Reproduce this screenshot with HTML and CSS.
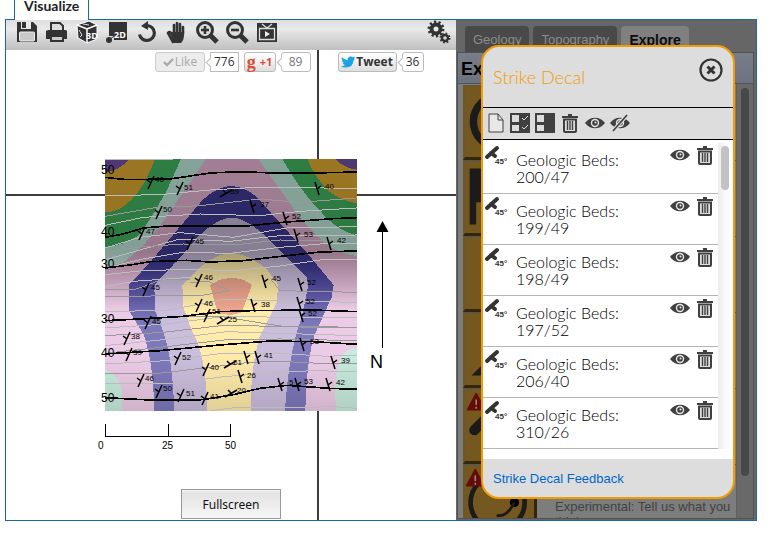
FILE: index.html
```html
<!DOCTYPE html>
<html lang="en">
<head>
<meta charset="utf-8">
<title>Visualize</title>
<link rel="stylesheet" href="styles.css">
</head>
<body>
<svg width="0" height="0" class="defs" aria-hidden="true">
  <symbol id="i-eye" viewBox="0 0 20 12"><path d="M0 6C5-1 15-1 20 6 15 13 5 13 0 6Z" fill="#404040"/><circle cx="10" cy="6" r="4.2" fill="#e6e6e6"/><circle cx="10" cy="6" r="2.8" fill="#404040"/><circle cx="10.5" cy="5.5" r="1" fill="#e6e6e6"/></symbol>
  <symbol id="i-trash" viewBox="0 0 16 20"><path d="M6 1h4v2h6v2H0V3h6z" fill="#404040"/><path d="M2 6.500h12V18q0 1-1 1H3q-1 0-1-1z" fill="#ddd" stroke="#404040" stroke-width="2"/><path d="M5.500 8v9M8 8v9M10.500 8v9" stroke="#404040" stroke-width="1.400"/></symbol>
  <symbol id="i-strike" viewBox="0 0 26 20"><path d="M3 12 13 3M7 8l4 3" stroke="#333" stroke-width="4" stroke-linecap="round"/><text x="11" y="19" class="deg">45°</text></symbol>
  <symbol id="i-warn" viewBox="0 0 20 20"><path d="M10 1 19 18H1z" fill="#650c08" stroke="#650c08" stroke-width="2" stroke-linejoin="round"/><path d="M10 7v6M10 15v2" stroke="#999" stroke-width="1.500"/></symbol>
</svg>

<nav class="tabs"><a class="tab" href="#visualize">Visualize</a></nav>

<main class="frame" id="visualize">
  <section class="viewer">
    <div class="toolbar">
      <button aria-label="Save"><svg viewBox="0 0 24 24"><path d="M2 2h16l4 4v16H2z" fill="#333"/><path d="M6 2h10v7H6z" fill="#e8e8e8"/><path d="M7 2h4v6H7z" fill="#333"/><rect x="4.500" y="12" width="15" height="9" rx="1" fill="#c9c9c9" stroke="#eee"/></svg></button>
      <button aria-label="Print"><svg viewBox="0 0 24 24"><path d="M6 11V3h9l3 3v5" fill="#ddd" stroke="#333" stroke-width="2"/><path d="M3 10h18l1 1v8h-4v-3H6v3H1v-8z" fill="#333"/><path d="M6 16h12v5H6z" fill="#ccc" stroke="#333" stroke-width="2"/></svg></button>
      <button aria-label="3D view"><svg viewBox="0 0 24 24"><path d="M2 5 14 1l8 4v14l-10 4-9-5z" fill="#333" stroke="#fff"/><path d="M2 5l10 4 10-4M12 9v14" fill="none" stroke="#fff" stroke-width="1.500"/><path d="m4 10 3 5-2 2M8 4l6 1" stroke="#ddd" fill="none"/><text x="11" y="19" class="glyph">3D</text></svg></button>
      <button aria-label="2D view"><svg viewBox="0 0 24 24"><path d="M4 2h18v18H9V16H4z" fill="#333"/><circle cx="4" cy="20" r="3" fill="#333"/><path d="M5 19l6-4" stroke="#333"/><text x="9" y="18" class="glyph">2D</text></svg></button>
      <button aria-label="Rotate"><svg viewBox="0 0 24 24"><path d="M12 5.500a7.500 7.500 0 1 1-7.500 9" fill="none" stroke="#333" stroke-width="3.200"/><path d="M13 1v9L6 6z" fill="#333"/></svg></button>
      <button aria-label="Pan"><svg viewBox="0 0 24 24"><path d="M8 22 3 13q1-2 3 0l2 2M9 14V5M12 13V3M15 13V4M18 14V7" fill="none" stroke="#333" stroke-width="2.600" stroke-linecap="round"/><path d="M7.500 12H19v4q0 4-3 7H9l-3-7z" fill="#333"/></svg></button>
      <button aria-label="Zoom in"><svg viewBox="0 0 24 24"><circle cx="10" cy="10" r="7.500" fill="#ddd" stroke="#333" stroke-width="3"/><path d="m15 15 7 7" stroke="#333" stroke-width="5"/><path d="M10 6v8M6 10h8" stroke="#333" stroke-width="2.600"/></svg></button>
      <button aria-label="Zoom out"><svg viewBox="0 0 24 24"><circle cx="10" cy="10" r="7.500" fill="#ddd" stroke="#333" stroke-width="3"/><path d="m15 15 7 7" stroke="#333" stroke-width="5"/><path d="M6 10h8" stroke="#333" stroke-width="2.600"/></svg></button>
      <button aria-label="Movie"><svg viewBox="0 0 24 24"><path d="M2 3h20v19H2z" fill="#333"/><path d="M4.500 8.500h15v11h-15zM7 4l5 4 5-4" fill="none" stroke="#ddd" stroke-width="1.300"/><path d="M10 11v6l5-3z" fill="#eee"/></svg></button>
      <button class="settings" aria-label="Settings"><svg viewBox="0 0 24 24"><circle cx="9" cy="9" r="4.500" fill="none" stroke="#333" stroke-width="4"/><circle cx="9" cy="9" r="7" fill="none" stroke="#333" stroke-width="3" stroke-dasharray="2.200 2.198"/><circle cx="18" cy="18" r="3" fill="none" stroke="#333" stroke-width="2.400"/><circle cx="18" cy="18" r="4.500" fill="none" stroke="#333" stroke-width="2" stroke-dasharray="1.700 1.834"/></svg></button>
    </div>
    <div class="stage">
      <svg class="canvas" viewBox="6 50 450 470" preserveAspectRatio="xMidYMin slice" role="img" aria-label="Geologic map">
        <defs>
          <linearGradient id="bg" x1="0" y1="0" x2="0" y2="1"><stop offset="0" stop-color="#f0bbdd"/><stop offset=".4" stop-color="#e3b3d2"/><stop offset=".6" stop-color="#eccbe6"/><stop offset="1" stop-color="#eccbe6"/></linearGradient>
          <linearGradient id="blue" gradientUnits="userSpaceOnUse" x1="0" y1="95" x2="0" y2="770"><stop offset="0" stop-color="#433d9b"/><stop offset=".35" stop-color="#403a97"/><stop offset=".62" stop-color="#7e79ba"/><stop offset="1" stop-color="#7d79bc"/></linearGradient>
          <linearGradient id="shade" x1="0" y1="0" x2="0" y2="1"><stop offset="0" stop-color="#000" stop-opacity=".32"/><stop offset=".37" stop-color="#000" stop-opacity=".34"/><stop offset=".6" stop-color="#000" stop-opacity="0"/><stop offset=".78" stop-color="#000" stop-opacity="0"/><stop offset="1" stop-color="#000" stop-opacity=".12"/></linearGradient>
          <g id="sl" fill="none" stroke="#000"><path d="M3-6-3 7M-4-2 0 1"/></g>
          <g id="sr" fill="none" stroke="#000"><path d="M-2-6 2 7M0 1 4-2"/></g>
          <g id="sh" fill="none" stroke="#000"><path d="M-6 4 6-3M-3-3 0 0"/></g>
        </defs>
        <path d="M318 50v470M6 195h450" stroke="#3c3c3c" stroke-width="2" shape-rendering="crispEdges"/>
        <g transform="translate(100 154) scale(.33333)" shape-rendering="crispEdges">
          <path fill="url(#bg)" d="M15 15h756v756H15z"/>
          <path fill="#c3f0e0" d="M15 15H317L270 85 180 215 120 285 70 325 15 340ZM475 15H771V306Q715 300 670 265L610 205Z"/>
          <path fill="#43b862" d="M15 15H243L200 110Q150 200 115 245 70 275 15 280ZM547 15H771V244Q710 230 660 170 600 110 547 15Z"/>
          <path fill="#e3ad33" d="M15 15H165Q130 110 80 150 50 175 15 175ZM622 15H771V148Q720 140 685 110 645 70 622 15Z"/>
          <path fill="#7452a8" d="M15 15H87Q60 50 15 55ZM705 15H771V47Q730 42 705 15Z"/>
          <path fill="#c7ebdd" d="M15 647Q50 660 65 700V771H15ZM771 582Q725 585 715 630 702 670 708 771H771Z"/>
          <path fill="url(#blue)" d="M395 96Q440 98 475 135L615 290 701 393 695 430 645 540Q620 610 616 771H163Q160 620 130 540L87 470V393L150 325 300 147Q345 98 395 96Z"/>
          <path fill="#cbbedd" d="M395 191Q440 192 500 250L620 370 625 393 605 490Q565 600 555 771H222Q220 610 185 520L165 470 163 393 250 300Q330 195 395 191Z"/>
          <path fill="#ffebaa" d="M395 297Q440 298 500 345L535 393 530 445 480 545Q450 640 453 771H321Q320 600 275 530L250 460 247 393 300 340Q350 298 395 297Z"/>
          <path fill="#eda58e" d="M330 393 360 377 395 371 430 377 456 393 425 475Q390 490 353 475Z"/>
          <path fill="url(#shade)" d="M15 15h756v756H15z"/>
          <g fill="none" stroke="#bcbcbc" stroke-width="3">
            <path d="M15 125 180 122 330 108 470 100 770 103M15 214 130 190 300 180 480 185 600 172 770 162M15 282 120 250 240 236 400 250 560 222 770 218M15 318 130 285 240 255 390 262 530 246 770 243M15 342 130 315 250 295 390 298 540 280 660 270 770 268M15 362 130 350 270 346 400 350 540 336 660 318 770 318M15 398 100 382 200 375 270 370M15 473 200 469 380 435 500 440 770 445M15 522 200 510 380 486 540 490 770 492M15 575 180 558 380 533 540 538 770 545M15 630 200 620 350 600 540 598 680 607 770 603M15 688 210 690 370 668 540 655 640 650 770 653M15 17 220 17 M330 771 410 760 550 762 700 758 770 763"/>
          </g>
          <g fill="none" stroke="#999" stroke-width="3">
            <path d="M15 187 160 162 300 155 480 135 600 145 770 132M15 297 130 278 250 270 400 273 540 258 660 260 770 248M15 408 110 405 190 375 270 376M270 386 325 382 390 410 300 425 15 427M510 372 540 410 770 415M15 500 180 490 360 487 540 516 770 520M15 545 190 535 380 513 540 518 770 522M15 598 180 580 390 556 540 555 770 560M15 658 190 657 310 642 450 625 540 622 660 628 770 628"/>
          </g>
          <g fill="none" stroke="#000" stroke-width="5">
            <path d="M15 70 80 77 210 75 330 57 420 53 520 57 690 56 770 54M15 250 70 240 130 222 200 216 430 217 560 204 700 194 770 191M15 342 90 333 150 323 260 319 330 324 430 320 560 305 660 294 770 291M15 500 120 495 250 487 360 473 450 470 640 468 770 473M15 600 180 590 360 573 510 561 640 563 770 571M15 731 150 738 310 737 400 722 480 703 560 694 690 703 770 706"/>
          </g>
        </g>
        <g stroke-width="1.500">
          <use href="#sl" x="151" y="182"/><use href="#sl" x="180" y="188"/><use href="#sl" x="159" y="212"/><use href="#sl" x="142" y="233"/><use href="#sl" x="190" y="243"/><use href="#sl" x="199" y="280"/><use href="#sl" x="146" y="289"/><use href="#sl" x="199" y="305"/><use href="#sl" x="148" y="322"/><use href="#sl" x="207" y="315"/><use href="#sl" x="127" y="338"/><use href="#sl" x="129" y="354"/><use href="#sl" x="178" y="358"/><use href="#sl" x="206" y="369"/><use href="#sl" x="141" y="380"/><use href="#sl" x="159" y="391"/><use href="#sl" x="181" y="395"/><use href="#sl" x="205" y="398"/>
          <use href="#sh" x="226" y="193"/><use href="#sh" x="223" y="320"/><use href="#sh" x="230" y="364"/><use href="#sh" x="231" y="393"/>
          <use href="#sr" x="317" y="188"/><use href="#sr" x="252" y="206"/><use href="#sr" x="285" y="218"/><use href="#sr" x="296" y="235"/><use href="#sr" x="329" y="243"/><use href="#sr" x="264" y="281"/><use href="#sr" x="300" y="284"/><use href="#sr" x="253" y="305"/><use href="#sr" x="299" y="303"/><use href="#sr" x="301" y="315"/><use href="#sr" x="302" y="344"/><use href="#sr" x="246" y="357"/><use href="#sr" x="257" y="357"/><use href="#sr" x="333" y="362"/><use href="#sr" x="240" y="376"/><use href="#sr" x="280" y="384"/><use href="#sr" x="297" y="384"/><use href="#sr" x="328" y="384"/>
        </g>
        <g class="dips">
          <text x="155" y="182">46</text><text x="184" y="190">51</text><text x="163" y="212">50</text><text x="146" y="234">47</text><text x="195" y="244">45</text><text x="204" y="280">46</text><text x="151" y="290">45</text><text x="204" y="306">46</text><text x="152" y="324">45</text><text x="212" y="314">51</text><text x="131" y="339">38</text><text x="133" y="355">39</text><text x="182" y="360">52</text><text x="210" y="370">40</text><text x="145" y="381">46</text><text x="163" y="391">50</text><text x="186" y="396">51</text><text x="210" y="399">41</text>
          <text x="230" y="194">39</text><text x="228" y="322">25</text><text x="233" y="365">21</text><text x="237" y="393">20</text><text x="325" y="189">40</text><text x="260" y="207">37</text><text x="292" y="219">52</text><text x="304" y="237">53</text><text x="337" y="243">42</text><text x="272" y="281">45</text><text x="307" y="285">52</text><text x="261" y="307">38</text><text x="306" y="304">52</text><text x="308" y="316">52</text><text x="310" y="344">53</text><text x="264" y="358">41</text><text x="341" y="363">39</text><text x="247" y="378">26</text><text x="289" y="385">5</text><text x="304" y="384">53</text><text x="336" y="385">42</text>
        </g>
        <g class="heights"><text x="101" y="174">50</text><text x="101" y="236">40</text><text x="101" y="268">30</text><text x="101" y="323">30</text><text x="101" y="357">40</text><text x="101" y="402">50</text></g>
        <path d="M105.500 424v12h125v-12M168.500 424v12M382.500 232v116" fill="none" stroke="#000" shape-rendering="crispEdges"/>
        <path d="M382.500 221l6 11h-12z"/>
        <g class="scale"><text x="98" y="449">0</text><text x="162" y="449">25</text><text x="225" y="449">50</text></g>
        <text x="370" y="368" class="north">N</text>
      </svg>
      <div class="social">
        <button class="pill like" disabled><svg width="11" height="9" viewBox="0 0 11 9"><path d="m1 4 3 3 6-6" fill="none" stroke="#aaa" stroke-width="2.400"/></svg>Like</button>
        <span class="count square">776</span>
        <button class="pill plus"><span class="g">g</span>+1</button>
        <span class="count pale">89</span>
        <button class="pill tweet"><svg width="14" height="12" viewBox="0 0 15 12"><path d="M1 1q3 3 6 3 0-4 3.500-4 1.500 0 2.500 1l2-.5-1 2 1 .2-1.500 1.500Q13 12 5 12q-3 0-5-1.500 3 0 4.500-1.300Q2.500 9 2 7h1.200Q1 6 1 4l1 .3Q0 2.500 1 1Z" fill="#1ba3e6"/></svg>Tweet</button>
        <span class="count">36</span>
      </div>
      <button class="fullscreen">Fullscreen</button>
    </div>
  </section>

  <aside class="side">
    <nav class="side-tabs"><a href="#geology">Geology</a><a href="#topography">Topography</a><a class="on" href="#explore">Explore</a></nav>
    <div class="explore" id="explore">
      <h2>Explore</h2>
      <div class="tools">
        <ul>
          <li><svg viewBox="0 0 74 74"><circle cx="37" cy="37" r="28" fill="none" stroke="#1b1b1b" stroke-width="8"/></svg></li>
          <li><svg viewBox="0 0 74 74"><path d="M5 6h62v60H56V42H12v24H5z" fill="#1b1b1b"/></svg></li>
          <li><svg viewBox="0 0 74 74"></svg></li>
          <li><svg viewBox="0 0 74 74"><path d="M7 65 37 35 67 65z" fill="#1b1b1b"/></svg></li>
          <li><svg viewBox="0 0 74 74"><path d="M10 42 38 14" stroke="#1b1b1b" stroke-width="11" stroke-linecap="round"/><use href="#i-warn" x="2" y="2" width="20" height="20"/></svg></li>
          <li><svg viewBox="0 0 74 74"><circle cx="35" cy="38" r="29" fill="none" stroke="#1b1b1b" stroke-width="5"/><circle cx="53" cy="38" r="5"/><path d="M53 38Q45 54 34 52" fill="none" stroke="#1b1b1b" stroke-width="3"/><use href="#i-warn" x="1" y="2" width="20" height="20"/></svg><p>Experimental: Tell us what you think</p></li>
        </ul>
        <div class="side-scroll"><i></i></div>
      </div>
    </div>

    <section class="dialog" role="dialog" aria-labelledby="dialog-title">
      <header><h1 id="dialog-title">Strike Decal</h1><button aria-label="Close"><svg width="24" height="24" viewBox="0 0 24 24"><circle cx="12" cy="12" r="10.500" fill="none" stroke="#333" stroke-width="2.200"/><path d="m8.500 8.500 7 7m0-7-7 7" stroke="#333" stroke-width="3"/></svg></button></header>
      <div class="actions">
        <button aria-label="New"><svg width="16" height="20" viewBox="0 0 16 20"><path d="M1 1h9l5 6v12H1z" fill="#e8e8e8" stroke="#404040"/><path d="M10 1v6h5" fill="none" stroke="#404040"/></svg></button>
        <button aria-label="Select all"><svg width="20" height="20" viewBox="0 0 20 20"><path d="M0 0h20v20H0z" fill="#404040"/><path d="M2 2h7v7H2zM2 12h7v6H2z" fill="#ddd"/><path d="m12 5 2 2 4-4M12 14l2 2 4-4" fill="none" stroke="#ddd"/></svg></button>
        <button aria-label="Select none"><svg width="20" height="20" viewBox="0 0 20 20"><path d="M0 0h20v20H0z" fill="#404040"/><path d="M2 2h7v7H2zM2 12h7v6H2z" fill="#ddd"/></svg></button>
        <button aria-label="Delete"><svg width="16" height="20"><use href="#i-trash"/></svg></button>
        <button aria-label="Show"><svg width="20" height="12"><use href="#i-eye"/></svg></button>
        <button aria-label="Hide"><svg width="20" height="18" viewBox="0 0 20 18"><use href="#i-eye" y="3" width="20" height="12"/><path d="M3 17 17 1" stroke="#ddd" stroke-width="4"/><path d="M3 17 17 1" stroke="#404040" stroke-width="1.600"/></svg></button>
      </div>
      <div class="body">
        <ul class="rows">
          <li><svg width="26" height="20"><use href="#i-strike"/></svg><span>Geologic Beds: 200/47</span><button aria-label="Show"><svg width="20" height="12"><use href="#i-eye"/></svg></button><button aria-label="Delete"><svg width="16" height="20"><use href="#i-trash"/></svg></button></li>
          <li><svg width="26" height="20"><use href="#i-strike"/></svg><span>Geologic Beds: 199/49</span><button aria-label="Show"><svg width="20" height="12"><use href="#i-eye"/></svg></button><button aria-label="Delete"><svg width="16" height="20"><use href="#i-trash"/></svg></button></li>
          <li><svg width="26" height="20"><use href="#i-strike"/></svg><span>Geologic Beds: 198/49</span><button aria-label="Show"><svg width="20" height="12"><use href="#i-eye"/></svg></button><button aria-label="Delete"><svg width="16" height="20"><use href="#i-trash"/></svg></button></li>
          <li><svg width="26" height="20"><use href="#i-strike"/></svg><span>Geologic Beds: 197/52</span><button aria-label="Show"><svg width="20" height="12"><use href="#i-eye"/></svg></button><button aria-label="Delete"><svg width="16" height="20"><use href="#i-trash"/></svg></button></li>
          <li><svg width="26" height="20"><use href="#i-strike"/></svg><span>Geologic Beds: 206/40</span><button aria-label="Show"><svg width="20" height="12"><use href="#i-eye"/></svg></button><button aria-label="Delete"><svg width="16" height="20"><use href="#i-trash"/></svg></button></li>
          <li><svg width="26" height="20"><use href="#i-strike"/></svg><span>Geologic Beds: 310/26</span><button aria-label="Show"><svg width="20" height="12"><use href="#i-eye"/></svg></button><button aria-label="Delete"><svg width="16" height="20"><use href="#i-trash"/></svg></button></li>
        </ul>
        <div class="scroll"><i></i></div>
      </div>
      <footer><a href="#feedback">Strike Decal Feedback</a></footer>
    </section>
  </aside>
</main>
</body>
</html>
```
FILE: styles.css
```css
* { box-sizing: border-box; }
body { margin: 0; height: 100vh; display: flex; flex-direction: column; padding: 0 22px 14px 5px; background: #fff; font-family: "Liberation Sans", sans-serif; overflow: hidden; }
button { border: 0; padding: 0; background: none; color: inherit; font: inherit; display: flex; align-items: center; justify-content: center; }
a { color: inherit; text-decoration: none; }
ul { list-style: none; margin: 0; padding: 0; }
svg { display: block; flex: none; }
.defs { position: absolute; }

.tabs { display: flex; height: 19px; padding-left: 9px; }
.tab { height: 20px; padding: 0 9px; border: solid #1c6a9a; border-width: 0 1px; background: #fff; font: bold 14px/12px Lato, sans-serif; color: #222; z-index: 1; }

.frame { flex: 1; min-height: 0; display: flex; border: 1px solid #1c6a9a; }
.viewer { flex: 1; min-width: 0; display: flex; flex-direction: column; }
.toolbar { display: flex; height: 30px; padding: 0 2px 0 6px; background: linear-gradient(#dedede, #eaeaea 30%, #bfbfbf); }
.toolbar button { width: 30px; height: 24px; }
.toolbar button svg { width: 24px; height: 24px; }
.toolbar .settings { margin-left: auto; }
.glyph { font: bold 9px "Open Sans", sans-serif; fill: #fff; }

.stage { flex: 1; position: relative; display: flex; flex-direction: column; align-items: center; justify-content: space-between; overflow: hidden; }
.canvas { position: absolute; inset: 0; width: 100%; height: 100%; }
.dips { font: 8px "Liberation Sans", sans-serif; }
.heights { font: 12px "Liberation Sans", sans-serif; }
.scale { font: 10px "Liberation Sans", sans-serif; }
.north { font: 18px "Liberation Sans", sans-serif; }

.social { position: relative; width: 100%; display: flex; gap: 5px; padding: 2px 0 0 149px; font: 12px/18px "Open Sans", sans-serif; }
.pill { height: 20px; border: 1px solid #bbb; border-radius: 3px; background: linear-gradient(#fff, #dedede); font-weight: bold; gap: 1px; }
.like { width: 50px; color: #aaa; background: #ececec; border-color: #ccc; font-weight: normal; }
.plus { width: 32px; color: #dd4b39; font-size: 11px; gap: 4px; }
.g { font: bold 18px/16px "Liberation Serif", serif; }
.tweet { width: 59px; margin-left: 22px; color: #333; }
.count { position: relative; height: 20px; min-width: 22px; padding: 0 3px; border: 1px solid #bbb; border-radius: 3px; background: #fff; color: #333; text-align: center; }
.count::before { content: ""; position: absolute; left: -4px; top: 6px; width: 6px; height: 6px; background: #fff; border: solid #bbb; border-width: 0 0 1px 1px; transform: rotate(45deg); }
.square { border-radius: 0; }
.pale { width: 30px; color: #777; }
.fullscreen { position: relative; width: 100px; height: 30px; margin-bottom: 1px; border: 1px solid #999; background: linear-gradient(#f4f4f4, #e3e3e3 10%, #f6f6f6); font: 12px "Noto Sans", sans-serif; color: #111; }

.side { position: relative; width: 300px; display: flex; flex-direction: column; background: #666; }
.side-tabs { display: flex; gap: 4px; height: 32px; padding: 6px 0 0 9px; font-size: 13px; line-height: 28px; color: #8c8c8c; }
.side-tabs a { padding: 0 8px; border-radius: 4px 4px 0 0; background: #494949; }
.side-tabs .on { background: #808080; color: #0c0c0c; font-size: 14px; font-weight: bold; }
.explore { flex: 1; min-height: 0; display: flex; flex-direction: column; margin: 0 2px 1px 1px; border: 1px solid #505257; overflow: hidden; }
.explore h2 { margin: 0; height: 31px; padding-left: 3px; font-size: 18px; line-height: 32px; background: linear-gradient(#787d88, #6c727f); color: #000; border-bottom: 1px solid #50545c; }
.tools { flex: 1; min-height: 0; display: flex; padding-left: 5px; background: #7d7d7d; }
.tools ul { flex: 1; height: 0; padding-top: 1px; }
.tools li { height: 76px; display: flex; gap: 18px; border-bottom: 1px solid #555; }
.tools li svg { width: 74px; height: 75px; background: #755720; border: solid; border-width: 1px 3px 3px 2px; border-color: #6b562e #33260c #33260c #6b562e; }
.tools p { width: 190px; margin: 34px -20px 0 0; font-size: 13px; line-height: 15px; color: #424242; }
.side-scroll { width: 17px; padding: 4px 4px; background: #696969; border-left: 1px solid #606060; }
.side-scroll i { display: block; width: 8px; height: 91%; border-radius: 4px; background: #484848; }

.dialog { position: absolute; inset: 25px 21px 21px 25px; display: flex; flex-direction: column; border: 2px solid #f19c00; border-radius: 18px; background: #ddd; overflow: hidden; }
.dialog header { height: 61px; display: flex; justify-content: space-between; padding: 11px 10px 0 10px; border-bottom: 1px solid #000; }
.dialog header button { height: 24px; }
.dialog h1 { margin: 0; font: 300 18px/38px Lato, sans-serif; color: #f19c00; }
.actions { height: 32px; display: flex; align-items: center; gap: 5px; padding: 0 4px 2px; border-bottom: 1px solid #000; }
.actions button { min-width: 20px; }
.actions button:first-child { min-width: 18px; }
.body { flex: 1; min-height: 0; display: flex; padding: 3px 0 10px; background: #fff; }
.rows { flex: 1; }
.rows li { height: 51px; display: flex; align-items: flex-start; padding: 2px 5px 0 1px; border-bottom: 1px solid #b5b5b5; }
.rows span { flex: 1; padding: 6px 14px 0 6px; font: 300 16px/17px Lato, sans-serif; color: #000; }
.rows button { height: 20px; margin-left: 7px; }
.deg { font: bold 8px "Liberation Sans", sans-serif; fill: #333; }
.scroll { width: 15px; padding: 3px; background: linear-gradient(90deg, #ececec, #fafafa 50%, #fff); }
.scroll i { display: block; width: 8px; height: 44px; border-radius: 4px; background: #c2c2c2; }
.dialog footer { height: 38px; padding-left: 10px; font-size: 13px; line-height: 40px; color: #06c; }
```
